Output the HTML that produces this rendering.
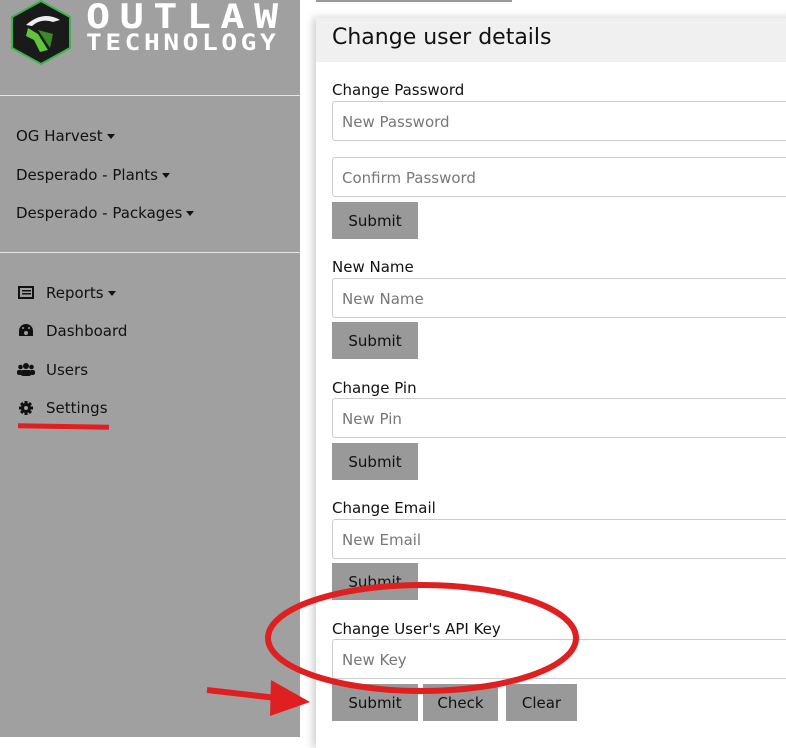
<!DOCTYPE html>
<html><head><style>
body{margin:0;width:786px;height:737px;overflow:hidden;background:#fff;font-family:"DejaVu Sans","Liberation Sans",sans-serif;position:relative}
.a{position:absolute}
.side{left:0;top:0;width:300px;height:737px;background:#a0a0a0}
.hr{left:0;width:300px;height:1px;background:#e6e6e6}
.nav{font-size:15px;color:#111}
.lbl{left:332px;font-size:15px;color:#111}
.inp{left:332px;width:470px;border:1px solid #ccc;border-radius:3px;background:#fff;box-sizing:border-box;height:40px;font-size:15px;color:#777;padding:11px 0 0 9px}
.btn{height:37px;background:#999;font-size:15px;color:#111;text-align:center;line-height:39px}
.car{display:inline-block;width:0;height:0;border-left:4px solid transparent;border-right:4px solid transparent;border-top:5px solid #111;vertical-align:middle;margin-left:4px}
</style></head><body>
<div class="a side"></div>
<svg class="a" style="left:8px;top:0" width="66" height="66" viewBox="0 0 66 66"><polygon points="33,1 62,17 62,48 33,64 4,48 4,17" fill="#1a1a1a" stroke="#3bb54a" stroke-width="2"/><path d="M18,25 Q35,10 52,20 L45,22 Q33,18 24,26Z" fill="#eee"/><path d="M20,28 L30,34 L40,50 L32,52 L26,40 L18,36Z" fill="#5fc53a"/><path d="M30,30 L45,34 L42,48 Z" fill="#3a8a2a"/></svg>
<div class="a" style="left:86px;top:-3px;font-size:34px;font-weight:bold;color:#fff;letter-spacing:8px;font-family:'DejaVu Sans Mono',monospace;transform:scaleX(1.18);transform-origin:0 0">OUTLAW</div>
<div class="a" style="left:86px;top:31px;font-size:22px;font-weight:bold;color:#fff;letter-spacing:3px;font-family:'DejaVu Sans Mono',monospace;transform:scaleX(1.19);transform-origin:0 0">TECHNOLOGY</div>
<div class="a hr" style="top:95px"></div>
<div class="a hr" style="top:252px"></div>
<div class="a nav" style="left:16px;top:127px">OG Harvest<span class="car"></span></div>
<div class="a nav" style="left:16px;top:166px">Desperado - Plants<span class="car"></span></div>
<div class="a nav" style="left:16px;top:204px">Desperado - Packages<span class="car"></span></div>
<svg class="a" style="left:18px;top:286px" width="16" height="13"><rect x="1" y="1" width="14" height="11" fill="none" stroke="#111" stroke-width="2"/><rect x="4" y="4" width="9" height="1.5" fill="#111"/><rect x="4" y="7" width="9" height="1.5" fill="#111"/></svg>
<div class="a nav" style="left:46px;top:284px">Reports<span class="car"></span></div>
<svg class="a" style="left:18px;top:323px" width="16" height="14"><path d="M8,1 A7,7 0 0 0 1,8 L1,13 L15,13 L15,8 A7,7 0 0 0 8,1Z" fill="#111"/><circle cx="8" cy="10" r="2" fill="#a0a0a0"/><circle cx="5" cy="5" r="1" fill="#a0a0a0"/><circle cx="11" cy="5" r="1" fill="#a0a0a0"/></svg>
<div class="a nav" style="left:46px;top:322px">Dashboard</div>
<svg class="a" style="left:17px;top:362px" width="18" height="14"><circle cx="9" cy="4" r="3" fill="#111"/><circle cx="3.5" cy="5" r="2.3" fill="#111"/><circle cx="14.5" cy="5" r="2.3" fill="#111"/><rect x="4" y="8" width="10" height="6" rx="2" fill="#111"/><rect x="0" y="8" width="5" height="5" rx="2" fill="#111"/><rect x="13" y="8" width="5" height="5" rx="2" fill="#111"/></svg>
<div class="a nav" style="left:46px;top:361px">Users</div>
<svg class="a" style="left:19px;top:401px" width="14" height="14" viewBox="0 0 14 14"><g fill="#111"><circle cx="7" cy="7" r="5"/><rect x="5.5" y="0" width="3" height="14"/><rect x="0" y="5.5" width="14" height="3"/><rect x="5.5" y="0" width="3" height="14" transform="rotate(45 7 7)"/><rect x="5.5" y="0" width="3" height="14" transform="rotate(-45 7 7)"/></g><circle cx="7" cy="7" r="2" fill="#a0a0a0"/></svg>
<div class="a nav" style="left:46px;top:399px">Settings</div>
<div class="a" style="left:18px;top:424px;width:91px;height:5px;background:#e02020;transform:rotate(1deg)"></div>

<div class="a" style="left:316px;top:0;width:196px;height:2px;background:#999"></div>
<div class="a" style="left:316px;top:18px;width:480px;height:730px;box-shadow:-3px 0 8px rgba(0,0,0,0.2);background:#fff"></div>
<div class="a" style="left:316px;top:18px;width:480px;height:44px;background:#f0f0f0"></div>
<div class="a" style="left:332px;top:25px;font-size:22px;color:#111">Change user details</div>

<div class="a lbl" style="top:81px">Change Password</div>
<div class="a inp" style="top:101px">New Password</div>
<div class="a inp" style="top:157px">Confirm Password</div>
<div class="a btn" style="left:332px;top:202px;width:86px">Submit</div>
<div class="a lbl" style="top:258px">New Name</div>
<div class="a inp" style="top:278px">New Name</div>
<div class="a btn" style="left:332px;top:322px;width:86px">Submit</div>
<div class="a lbl" style="top:379px">Change Pin</div>
<div class="a inp" style="top:398px">New Pin</div>
<div class="a btn" style="left:332px;top:443px;width:86px">Submit</div>
<div class="a lbl" style="top:499px">Change Email</div>
<div class="a inp" style="top:519px">New Email</div>
<div class="a btn" style="left:332px;top:563px;width:86px">Submit</div>
<div class="a lbl" style="top:620px">Change User's API Key</div>
<div class="a inp" style="top:639px">New Key</div>
<div class="a btn" style="left:332px;top:684px;width:86px">Submit</div>
<div class="a btn" style="left:423px;top:684px;width:75px">Check</div>
<div class="a btn" style="left:506px;top:684px;width:71px">Clear</div>

<svg class="a" style="left:0;top:0" width="786" height="737">
<ellipse cx="422" cy="638" rx="154" ry="53" fill="none" stroke="#e02020" stroke-width="6"/>
<line x1="207" y1="690" x2="285" y2="699" stroke="#e02020" stroke-width="6"/>
<polygon points="271,680 310,702 270,716" fill="#e02020"/>
</svg>
</body></html>
